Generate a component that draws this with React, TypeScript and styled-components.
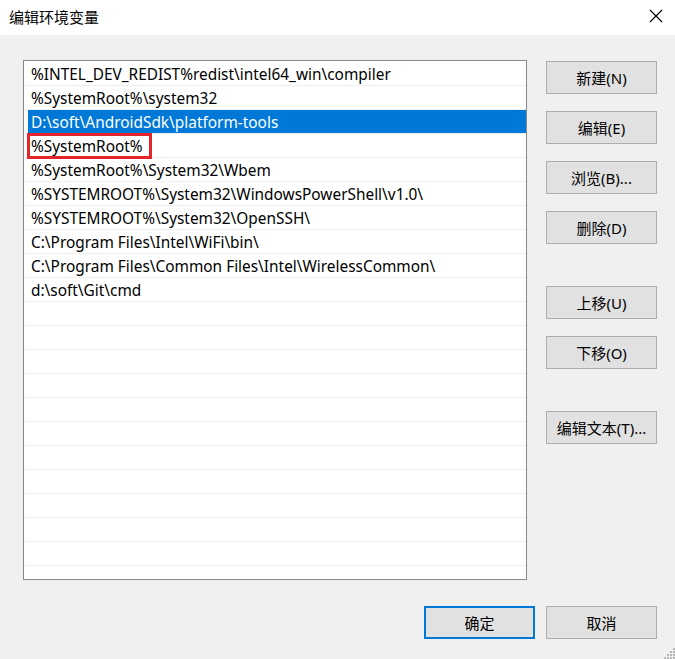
import React from "react";
import styled, { createGlobalStyle } from "styled-components";

const Global = createGlobalStyle`
  html, body { margin: 0; padding: 0; }
  body {
    width: 675px;
    height: 659px;
    overflow: hidden;
    font-family: "Noto Sans", "Noto Sans CJK SC", sans-serif;
    color: #000;
  }
`;

const Window = styled.div`
  position: relative;
  width: 675px;
  height: 659px;
  display: flex;
  flex-direction: column;
  background: #f0f0f0;
`;

const TitleBar = styled.div`
  height: 35px;
  background: #fff;
  display: flex;
  align-items: center;
  justify-content: space-between;
  padding: 0 12px 0 9px;
  box-sizing: border-box;
  flex: none;
`;

const Title = styled.div`
  font-family: "Noto Sans CJK SC", sans-serif;
  font-size: 15px;
  line-height: 20px;
  margin-top: -2px;
`;

const CloseBtn = styled.div`
  width: 14px;
  height: 14px;
  display: flex;
  margin-top: -4px;
`;

const Body = styled.div`
  display: flex;
  flex-direction: column;
  padding: 25px 18px 0 23px;
`;

const Main = styled.div`
  display: flex;
  gap: 19px;
`;

const ListBox = styled.div`
  position: relative;
  width: 504px;
  height: 520px;
  box-sizing: border-box;
  border: 1px solid #828790;
  background: #fff;
  overflow: hidden;
  padding-top: 1px;
`;

const Row = styled.div`
  height: 24px;
  box-sizing: border-box;
  border-bottom: 1px solid #efefef;
  margin-left: 1px;
  display: flex;
`;

const RowInner = styled.div<{ $selected?: boolean }>`
  flex: 1;
  margin-left: 3px;
  padding: 2px 0 0 3px;
  box-sizing: border-box;
  height: 23px;
  display: flex;
  align-items: center;
  font-size: 15.4px;
  white-space: nowrap;
  background: ${(p) => (p.$selected ? "#0078d7" : "transparent")};
  color: ${(p) => (p.$selected ? "#fff" : "#000")};
`;

const Highlight = styled.div`
  position: absolute;
  left: 3px;
  top: 72px;
  width: 125px;
  height: 26px;
  box-sizing: border-box;
  border: 3px solid #e3242b;
  pointer-events: none;
`;

const ButtonCol = styled.div`
  display: flex;
  flex-direction: column;
  padding-top: 1px;
`;

const Button = styled.div<{ $gap?: number; $default?: boolean }>`
  width: 111px;
  height: 33px;
  box-sizing: border-box;
  border: ${(p) => (p.$default ? "2px solid #0078d7" : "1px solid #adadad")};
  background: #e1e1e1;
  display: flex;
  align-items: center;
  justify-content: center;
  font-size: 15px;
  padding-bottom: 1px;
  margin-top: ${(p) => p.$gap ?? 0}px;
  white-space: nowrap;
`;

const Footer = styled.div`
  display: flex;
  justify-content: flex-end;
  gap: 11px;
  margin-top: 26px;
`;

const Grip = styled.svg`
  position: absolute;
  right: 0;
  bottom: 0;
`;

const items = [
  "%INTEL_DEV_REDIST%redist\\intel64_win\\compiler",
  "%SystemRoot%\\system32",
  "D:\\soft\\AndroidSdk\\platform-tools",
  "%SystemRoot%",
  "%SystemRoot%\\System32\\Wbem",
  "%SYSTEMROOT%\\System32\\WindowsPowerShell\\v1.0\\",
  "%SYSTEMROOT%\\System32\\OpenSSH\\",
  "C:\\Program Files\\Intel\\WiFi\\bin\\",
  "C:\\Program Files\\Common Files\\Intel\\WirelessCommon\\",
  "d:\\soft\\Git\\cmd",
];

const rows = [...items, ...Array(12).fill("")];

const sideButtons: { label: string; gap: number }[] = [
  { label: "新建(N)", gap: 0 },
  { label: "编辑(E)", gap: 17 },
  { label: "浏览(B)...", gap: 17 },
  { label: "删除(D)", gap: 17 },
  { label: "上移(U)", gap: 42 },
  { label: "下移(O)", gap: 17 },
  { label: "编辑文本(T)...", gap: 42 },
];

export default function App() {
  return (
    <>
      <Global />
      <Window>
        <TitleBar>
          <Title>编辑环境变量</Title>
          <CloseBtn>
            <svg width="14" height="14" viewBox="0 0 14 14">
              <path d="M1 1 L13 13 M13 1 L1 13" stroke="#000" strokeWidth="1.1" fill="none" />
            </svg>
          </CloseBtn>
        </TitleBar>
        <Body>
          <Main>
            <ListBox>
              {rows.map((t, i) => (
                <Row key={i}>
                  <RowInner $selected={i === 2}>{t}</RowInner>
                </Row>
              ))}
              <Highlight />
            </ListBox>
            <ButtonCol>
              {sideButtons.map((b) => (
                <Button key={b.label} $gap={b.gap}>
                  {b.label}
                </Button>
              ))}
            </ButtonCol>
          </Main>
          <Footer>
            <Button $default>确定</Button>
            <Button>取消</Button>
          </Footer>
        </Body>
        <Grip width="12" height="12" viewBox="0 0 12 12">
          {[
            [9, 0],
            [6, 3], [9, 3],
            [3, 6], [6, 6], [9, 6],
            [0, 9], [3, 9], [6, 9], [9, 9],
          ].map(([x, y], i) => (
            <rect key={i} x={x + 1} y={y + 1} width="2" height="2" fill="#b8b8b8" />
          ))}
        </Grip>
      </Window>
    </>
  );
}
